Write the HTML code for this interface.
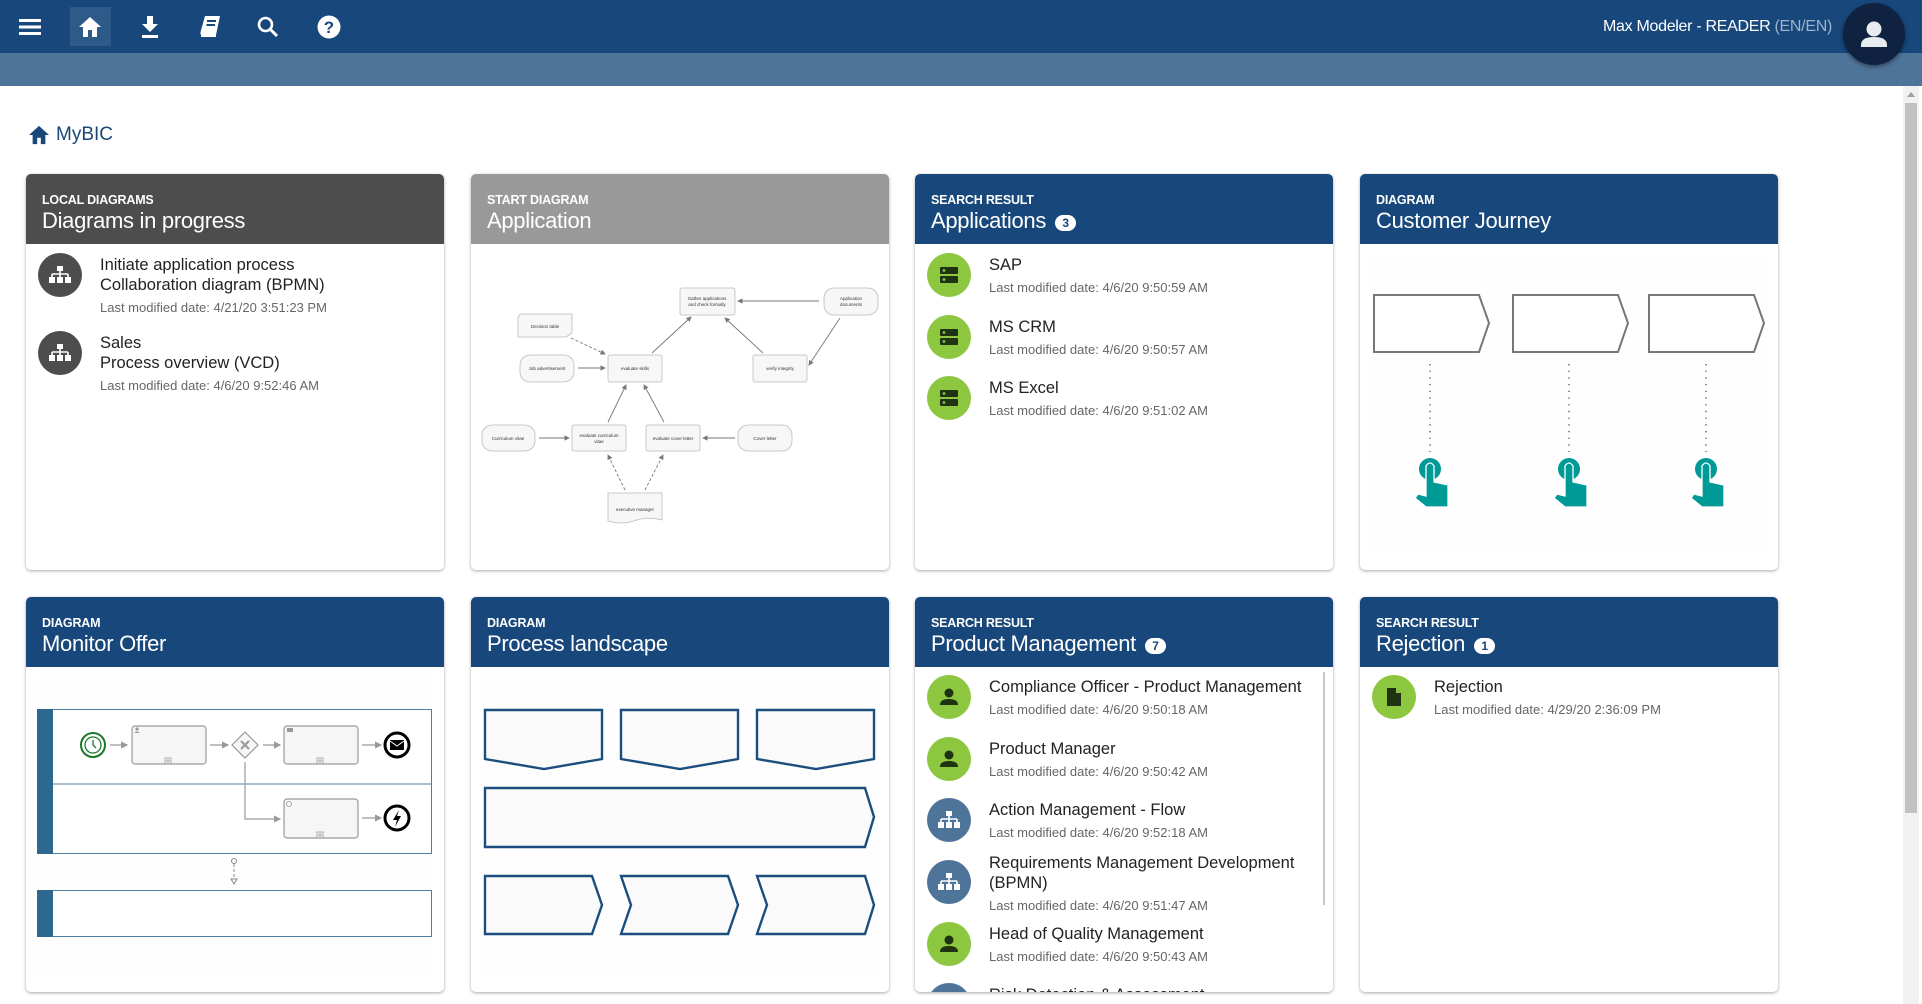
<!DOCTYPE html>
<html><head><meta charset="utf-8">
<style>
*{box-sizing:border-box;margin:0;padding:0}
body{width:1922px;height:1004px;overflow:hidden;background:#fff;font-family:"Liberation Sans",Arial,sans-serif;position:relative}
.top{position:absolute;left:0;top:0;width:1922px;height:53px;background:#17477b}
.sub{position:absolute;left:0;top:53px;width:1922px;height:33px;background:#4f7499}
.nav{position:absolute;top:0;height:53px;display:flex;align-items:center;justify-content:center}
.homebtn{position:absolute;left:70px;top:7px;width:41px;height:39px;background:#2e5a8a}
.user{position:absolute;right:90px;top:18px;color:#fff;font-size:16px;letter-spacing:-0.3px}
.user span{color:#9fb3cc}
.avatar{position:absolute;left:1843px;top:3px;width:62px;height:62px;border-radius:50%;background:#0f2240;box-shadow:0 2px 4px rgba(0,0,0,.4)}
.scroll{position:absolute;left:1903px;top:86px;width:16px;height:918px;background:#f1f1f1}
.thumb{position:absolute;left:1905px;top:103px;width:12px;height:710px;background:#c1c1c1}
.crumb{position:absolute;left:28px;top:124px;color:#17477b;font-size:19px;display:flex;align-items:center;gap:6px}
.card{position:absolute;width:418px;background:#fff;border-radius:5px;box-shadow:0 1px 3px rgba(0,0,0,.35);overflow:hidden}
.hd{height:70px;background:#17477b;color:#fff;padding:19px 16px 0}
.hd .l{font-size:12.5px;font-weight:bold;letter-spacing:-0.2px;line-height:14px}
.hd .t{font-size:22px;font-weight:300;line-height:28px;letter-spacing:-0.3px;display:flex;align-items:center}
.badge{display:inline-block;width:21px;height:16px;border-radius:8px;background:#fff;color:#17477b;font-size:12px;font-weight:bold;text-align:center;line-height:16px;margin-left:9px;margin-top:3px}
.body{position:relative}
.item{position:absolute;left:12px;right:10px;display:flex}
.ic{width:44px;height:44px;border-radius:50%;flex:none;display:flex;align-items:center;justify-content:center}
.tx{margin-left:18px;color:#222;font-size:16.5px;line-height:20px;padding-top:2px}
.tx .d{font-size:13px;color:#666;line-height:18px;margin-top:4px}
.green{background:#8dc63f}.dark{background:#4d4d4d}.blue{background:#4f7499}
.dia{position:absolute;left:10px;top:10px;width:398px;height:296px;background:#fefefe}
</style></head><body>
<div class="top"></div><div class="sub"></div>
<div class="nav" style="left:18px;width:24px"><svg width="22" height="18" viewBox="0 0 22 18"><rect x="0" y="1" width="22" height="3" fill="#fff"/><rect x="0" y="7.5" width="22" height="3" fill="#fff"/><rect x="0" y="14" width="22" height="3" fill="#fff"/></svg></div>
<div class="homebtn"></div>
<div class="nav" style="left:77px;width:26px"><svg width="24" height="22" viewBox="0 0 24 22"><path d="M12 1 L23 11 H19 V21 H14 V14 H10 V21 H5 V11 H1 Z" fill="#fff"/></svg></div>
<div class="nav" style="left:138px;width:24px"><svg width="18" height="22" viewBox="0 0 18 22"><path d="M6 0 H12 V8 H17 L9 16 L1 8 H6 Z" fill="#fff"/><rect x="1" y="19" width="16" height="3" fill="#fff"/></svg></div>
<div class="nav" style="left:197px;width:26px"><svg width="24" height="24" viewBox="0 0 24 24"><path d="M7 1 H22 L18 20 H4 Q2 20 2.5 17 Z" fill="#fff"/><path d="M3 21 H18" stroke="#fff" stroke-width="2"/><path d="M9 6 H18 M8.5 10 H17" stroke="#17477b" stroke-width="2"/></svg></div>
<div class="nav" style="left:256px;width:24px"><svg width="22" height="22" viewBox="0 0 22 22"><circle cx="8.5" cy="8.5" r="6.5" fill="none" stroke="#fff" stroke-width="2.6"/><path d="M13 13 L20 20" stroke="#fff" stroke-width="3"/></svg></div>
<div class="nav" style="left:316px;width:26px"><svg width="24" height="24" viewBox="0 0 24 24"><circle cx="12" cy="12" r="11.5" fill="#fff"/><text x="12" y="18" font-size="17" font-weight="bold" text-anchor="middle" fill="#17477b" font-family="Liberation Sans">?</text></svg></div>
<div class="user">Max Modeler - READER <span>(EN/EN)</span></div>
<div class="avatar"><svg width="62" height="62" viewBox="0 0 62 62"><circle cx="31" cy="26" r="7.5" fill="#e8ecf0"/><path d="M18 42 Q18 34 31 34 Q44 34 44 42 V44 H18 Z" fill="#e8ecf0"/></svg></div>
<div class="scroll"></div><div class="thumb"></div>
<svg style="position:absolute;left:1905px;top:90px" width="12" height="8"><path d="M2 7 L6 2 L10 7 Z" fill="#a0a0a0"/></svg>

<div class="crumb"><svg width="22" height="20" viewBox="0 0 24 22"><path d="M12 1 L23 11 H19 V21 H14 V14 H10 V21 H5 V11 H1 Z" fill="#17477b"/></svg>MyBIC</div>

<!-- Card 1 -->
<div class="card" style="left:26px;top:174px;height:396px">
 <div class="hd" style="background:#4d4d4d"><div class="l">LOCAL DIAGRAMS</div><div class="t">Diagrams in progress</div></div>
 <div class="body">
  <div class="item" style="top:9px"><div class="ic dark"><svg width="22" height="20" viewBox="0 0 22 20"><rect x="8" y="1" width="6" height="5" fill="#fff"/><path d="M11 6 V9 M3 9 H19 M3 9 V12 M11 9 V12 M19 9 V12" stroke="#fff" stroke-width="1.6" fill="none"/><rect x="0" y="12" width="6" height="6" fill="#fff"/><rect x="8" y="12" width="6" height="6" fill="#fff"/><rect x="16" y="12" width="6" height="6" fill="#fff"/></svg></div><div class="tx">Initiate application process<br>Collaboration diagram (BPMN)<div class="d">Last modified date: 4/21/20 3:51:23 PM</div></div></div>
  <div class="item" style="top:87px"><div class="ic dark"><svg width="22" height="20" viewBox="0 0 22 20"><rect x="8" y="1" width="6" height="5" fill="#fff"/><path d="M11 6 V9 M3 9 H19 M3 9 V12 M11 9 V12 M19 9 V12" stroke="#fff" stroke-width="1.6" fill="none"/><rect x="0" y="12" width="6" height="6" fill="#fff"/><rect x="8" y="12" width="6" height="6" fill="#fff"/><rect x="16" y="12" width="6" height="6" fill="#fff"/></svg></div><div class="tx">Sales<br>Process overview (VCD)<div class="d">Last modified date: 4/6/20 9:52:46 AM</div></div></div>
 </div>
</div>

<!-- Card 2 -->
<div class="card" style="left:471px;top:174px;height:396px">
 <div class="hd" style="background:#999"><div class="l">START DIAGRAM</div><div class="t">Application</div></div>
 <div class="body">
 <svg width="418" height="326" viewBox="0 0 418 326" font-family="Liberation Sans" font-size="4.5" text-anchor="middle" fill="#333">
  <defs><marker id="ar" markerWidth="6" markerHeight="6" refX="5" refY="3" orient="auto"><path d="M0 0 L6 3 L0 6Z" fill="#777"/></marker></defs>
  <g stroke="#bbb" fill="#f7f7f7" stroke-width="0.8">
   <rect x="209" y="44" width="55" height="27" rx="2"/>
   <rect x="353" y="44" width="54" height="27" rx="10"/>
   <path d="M49 70 H101 V89 L95 93 H47 V74 Z"/>
   <rect x="49" y="111" width="54" height="27" rx="10"/>
   <rect x="137" y="111" width="54" height="27" rx="2"/>
   <rect x="282" y="111" width="54" height="27" rx="2"/>
   <rect x="11" y="181" width="53" height="26" rx="10"/>
   <rect x="101" y="181" width="54" height="26" rx="2"/>
   <rect x="175" y="181" width="54" height="26" rx="2"/>
   <rect x="267" y="181" width="54" height="26" rx="10"/>
   <path d="M137 249 H191 V276 Q175 272 163 277 Q150 281 137 277 Z"/>
  </g>
  <g stroke="#777" stroke-width="0.9" fill="none" marker-end="url(#ar)">
   <path d="M348 57 H267"/><path d="M181 109 L220 73"/><path d="M292 109 L254 74"/><path d="M369 74 L338 121"/>
   <path d="M107 124 H134"/><path d="M137 178 L155 141"/><path d="M193 178 L173 141"/><path d="M68 194 H98"/><path d="M264 194 H232"/>
   <path d="M100 94 L134 110" stroke-dasharray="3 2"/>
   <path d="M154 246 L137 211" stroke-dasharray="3 2"/><path d="M174 246 L192 211" stroke-dasharray="3 2"/>
  </g>
  <text x="236" y="56">Gather applications</text><text x="236" y="62">and check formally</text>
  <text x="380" y="56">Application</text><text x="380" y="62">documents</text>
  <text x="74" y="84">Decision table</text>
  <text x="76" y="126">Job advertisement</text>
  <text x="164" y="126">evaluate skills</text>
  <text x="309" y="126">verify integrity</text>
  <text x="37" y="196">Curriculum vitae</text>
  <text x="128" y="193">evaluate curriculum</text><text x="128" y="199">vitae</text>
  <text x="202" y="196">evaluate cover letter</text>
  <text x="294" y="196">Cover letter</text>
  <text x="164" y="267">executive manager</text>
 </svg>
 </div>
</div>

<!-- Card 3 -->
<div class="card" style="left:915px;top:174px;height:396px">
 <div class="hd"><div class="l">SEARCH RESULT</div><div class="t">Applications<span class="badge">3</span></div></div>
 <div class="body">
  <div class="item" style="top:9px"><div class="ic green"><svg width="20" height="20" viewBox="0 0 20 20"><rect x="1" y="2" width="18" height="7" rx="1" fill="#1e3312"/><rect x="1" y="11" width="18" height="7" rx="1" fill="#1e3312"/><circle cx="5" cy="5.5" r="1.4" fill="#8dc63f"/><circle cx="5" cy="14.5" r="1.4" fill="#8dc63f"/></svg></div><div class="tx">SAP<div class="d">Last modified date: 4/6/20 9:50:59 AM</div></div></div>
  <div class="item" style="top:71px"><div class="ic green"><svg width="20" height="20" viewBox="0 0 20 20"><rect x="1" y="2" width="18" height="7" rx="1" fill="#1e3312"/><rect x="1" y="11" width="18" height="7" rx="1" fill="#1e3312"/><circle cx="5" cy="5.5" r="1.4" fill="#8dc63f"/><circle cx="5" cy="14.5" r="1.4" fill="#8dc63f"/></svg></div><div class="tx">MS CRM<div class="d">Last modified date: 4/6/20 9:50:57 AM</div></div></div>
  <div class="item" style="top:132px"><div class="ic green"><svg width="20" height="20" viewBox="0 0 20 20"><rect x="1" y="2" width="18" height="7" rx="1" fill="#1e3312"/><rect x="1" y="11" width="18" height="7" rx="1" fill="#1e3312"/><circle cx="5" cy="5.5" r="1.4" fill="#8dc63f"/><circle cx="5" cy="14.5" r="1.4" fill="#8dc63f"/></svg></div><div class="tx">MS Excel<div class="d">Last modified date: 4/6/20 9:51:02 AM</div></div></div>
 </div>
</div>

<!-- Card 4 -->
<div class="card" style="left:1360px;top:174px;height:396px">
 <div class="hd"><div class="l">DIAGRAM</div><div class="t">Customer Journey</div></div>
 <div class="body"><div class="dia"></div>
 <svg style="position:absolute;left:0;top:0" width="418" height="326" viewBox="0 0 418 326">
  <g fill="#fff" stroke="#777" stroke-width="2">
   <path d="M14 51 H119 L129 79 L119 108 H14 Z"/><path d="M153 51 H258 L268 79 L258 108 H153 Z"/><path d="M289 51 H394 L404 79 L394 108 H289 Z"/>
  </g>
  <g stroke="#888" stroke-width="2" stroke-dasharray="1.2 5.5"><path d="M70 120 V208"/><path d="M209 120 V208"/><path d="M346 120 V208"/></g>
  <g fill="#009a96">
   <g transform="translate(70 0)"><circle cx="0" cy="225" r="11"/><path d="M-4 222 Q0 216 4 222 V238 L18 241 V263 H-4 L-15 254 L-12 250 L-4 252 Z" stroke="#fff" stroke-width="1.3"/></g>
   <g transform="translate(209 0)"><circle cx="0" cy="225" r="11"/><path d="M-4 222 Q0 216 4 222 V238 L18 241 V263 H-4 L-15 254 L-12 250 L-4 252 Z" stroke="#fff" stroke-width="1.3"/></g>
   <g transform="translate(346 0)"><circle cx="0" cy="225" r="11"/><path d="M-4 222 Q0 216 4 222 V238 L18 241 V263 H-4 L-15 254 L-12 250 L-4 252 Z" stroke="#fff" stroke-width="1.3"/></g>
  </g>
 </svg></div>
</div>

<!-- Card 5 -->
<div class="card" style="left:26px;top:597px;height:395px">
 <div class="hd"><div class="l">DIAGRAM</div><div class="t">Monitor Offer</div></div>
 <div class="body"><div class="dia"></div>
 <svg style="position:absolute;left:0;top:0" width="418" height="326" viewBox="0 0 418 326">
  <defs><marker id="a2" markerWidth="6" markerHeight="6" refX="5" refY="3" orient="auto"><path d="M0 0 L6 3 L0 6Z" fill="#999"/></marker></defs>
  <rect x="11.5" y="42.5" width="394" height="144" fill="#fff" stroke="#4f7fa3"/>
  <rect x="11" y="42" width="16" height="145" fill="#2d688f"/>
  <path d="M27 117 H406" stroke="#4f7fa3"/>
  <rect x="11.5" y="223.5" width="394" height="46" fill="#fff" stroke="#4f7fa3"/>
  <rect x="11" y="223" width="16" height="47" fill="#2d688f"/>
  <circle cx="67" cy="78" r="12" fill="#fff" stroke="#1a7a2a" stroke-width="2"/><circle cx="67" cy="78" r="8" fill="none" stroke="#1a7a2a" stroke-width="1.3"/><path d="M67 73 V78 L70 81" stroke="#1a7a2a" stroke-width="1.3" fill="none"/>
  <g fill="#f6f6f6" stroke="#999" stroke-width="1.2">
   <rect x="106" y="59" width="74" height="38" rx="3"/><rect x="258" y="59" width="74" height="38" rx="3"/><rect x="258" y="132" width="74" height="39" rx="3"/>
   <path d="M219 65 L232 78 L219 91 L206 78 Z"/>
  </g>
  <g stroke="#999" stroke-width="0.8" fill="none">
   <rect x="139" y="91" width="6" height="6"/><path d="M142 92 V96 M140 94 H144"/>
   <rect x="291" y="91" width="6" height="6"/><path d="M294 92 V96 M292 94 H296"/>
   <rect x="291" y="165" width="6" height="6"/><path d="M294 166 V170 M292 168 H296"/>
   <circle cx="263" cy="137" r="2.5"/>
  </g>
  <circle cx="111" cy="62" r="1.6" fill="#999"/><path d="M108 66 Q111 63 114 66 Z" fill="#999"/>
  <rect x="261" y="61" width="6" height="4" fill="#999"/>
  <path d="M215 74 L223 82 M223 74 L215 82" stroke="#999" stroke-width="2"/>
  <g stroke="#999" stroke-width="1.2" fill="none" marker-end="url(#a2)">
   <path d="M84 78 H101"/><path d="M184 78 H202"/><path d="M237 78 H254"/><path d="M336 78 H355"/><path d="M219 95 V152 H254"/><path d="M336 151 H355"/>
  </g>
  <circle cx="371" cy="78" r="12" fill="#fff" stroke="#000" stroke-width="3"/><rect x="364" y="73" width="14" height="10" fill="#000"/><path d="M364 74 L371 79 L378 74" stroke="#fff" fill="none"/>
  <circle cx="371" cy="151" r="12" fill="#fff" stroke="#000" stroke-width="3"/><path d="M373 143 L367 153 H371 L369 160 L375 149 H371 Z" fill="#000"/>
  <circle cx="208" cy="194" r="2.5" fill="none" stroke="#888"/><path d="M208 197 V212" stroke="#888" stroke-dasharray="3 2"/><path d="M205 212 L211 212 L208 217 Z" fill="#fff" stroke="#888"/>
 </svg></div>
</div>

<!-- Card 6 -->
<div class="card" style="left:471px;top:597px;height:395px">
 <div class="hd"><div class="l">DIAGRAM</div><div class="t">Process landscape</div></div>
 <div class="body"><div class="dia"></div>
 <svg style="position:absolute;left:0;top:0" width="418" height="326" viewBox="0 0 418 326">
  <g fill="#fafafa" stroke="#1b4e7e" stroke-width="2.4">
   <path d="M14 43 H131 V92 L73 102 L14 92 Z"/><path d="M150 43 H267 V92 L209 102 L150 92 Z"/><path d="M286 43 H403 V92 L345 102 L286 92 Z"/>
   <path d="M14 121 H394 L403 150 L394 180 H14 Z"/>
   <path d="M14 209 H121 L131 238 L121 267 H14 Z"/><path d="M150 209 H257 L267 238 L257 267 H150 L160 238 Z"/><path d="M286 209 H394 L403 238 L394 267 H286 L296 238 Z"/>
  </g>
 </svg></div>
</div>

<!-- Card 7 -->
<div class="card" style="left:915px;top:597px;height:395px">
 <div class="hd"><div class="l">SEARCH RESULT</div><div class="t">Product Management<span class="badge">7</span></div></div>
 <div class="body">
  <div style="position:absolute;left:408px;top:5px;width:2px;height:233px;background:#c8c8c8"></div>
  <div class="item" style="top:8px"><div class="ic green"><svg width="20" height="20" viewBox="0 0 20 20"><circle cx="10" cy="6" r="4.5" fill="#1e3312"/><path d="M1 18 Q1 12 10 12 Q19 12 19 18 Z" fill="#1e3312"/></svg></div><div class="tx">Compliance Officer - Product Management<div class="d">Last modified date: 4/6/20 9:50:18 AM</div></div></div>
  <div class="item" style="top:70px"><div class="ic green"><svg width="20" height="20" viewBox="0 0 20 20"><circle cx="10" cy="6" r="4.5" fill="#1e3312"/><path d="M1 18 Q1 12 10 12 Q19 12 19 18 Z" fill="#1e3312"/></svg></div><div class="tx">Product Manager<div class="d">Last modified date: 4/6/20 9:50:42 AM</div></div></div>
  <div class="item" style="top:131px"><div class="ic blue"><svg width="22" height="20" viewBox="0 0 22 20"><rect x="8" y="1" width="6" height="5" fill="#fff"/><path d="M11 6 V9 M3 9 H19 M3 9 V12 M11 9 V12 M19 9 V12" stroke="#fff" stroke-width="1.6" fill="none"/><rect x="0" y="12" width="6" height="6" fill="#fff"/><rect x="8" y="12" width="6" height="6" fill="#fff"/><rect x="16" y="12" width="6" height="6" fill="#fff"/></svg></div><div class="tx">Action Management - Flow<div class="d">Last modified date: 4/6/20 9:52:18 AM</div></div></div>
  <div class="item" style="top:193px"><div class="ic blue"><svg width="22" height="20" viewBox="0 0 22 20"><rect x="8" y="1" width="6" height="5" fill="#fff"/><path d="M11 6 V9 M3 9 H19 M3 9 V12 M11 9 V12 M19 9 V12" stroke="#fff" stroke-width="1.6" fill="none"/><rect x="0" y="12" width="6" height="6" fill="#fff"/><rect x="8" y="12" width="6" height="6" fill="#fff"/><rect x="16" y="12" width="6" height="6" fill="#fff"/></svg></div><div class="tx" style="margin-top:-9px">Requirements Management Development<br>(BPMN)<div class="d">Last modified date: 4/6/20 9:51:47 AM</div></div></div>
  <div class="item" style="top:255px"><div class="ic green"><svg width="20" height="20" viewBox="0 0 20 20"><circle cx="10" cy="6" r="4.5" fill="#1e3312"/><path d="M1 18 Q1 12 10 12 Q19 12 19 18 Z" fill="#1e3312"/></svg></div><div class="tx">Head of Quality Management<div class="d">Last modified date: 4/6/20 9:50:43 AM</div></div></div>
  <div class="item" style="top:316px"><div class="ic blue"></div><div class="tx">Risk Detection &amp; Assessment</div></div>
 </div>
</div>

<!-- Card 8 -->
<div class="card" style="left:1360px;top:597px;height:395px">
 <div class="hd"><div class="l">SEARCH RESULT</div><div class="t">Rejection<span class="badge">1</span></div></div>
 <div class="body">
  <div class="item" style="top:8px"><div class="ic green"><svg width="18" height="20" viewBox="0 0 18 20"><path d="M2 1 H11 L16 6 V19 H2 Z" fill="#1e3312"/><path d="M11 1 V6 H16" fill="#8dc63f"/></svg></div><div class="tx">Rejection<div class="d">Last modified date: 4/29/20 2:36:09 PM</div></div></div>
 </div>
</div>
</body></html>
